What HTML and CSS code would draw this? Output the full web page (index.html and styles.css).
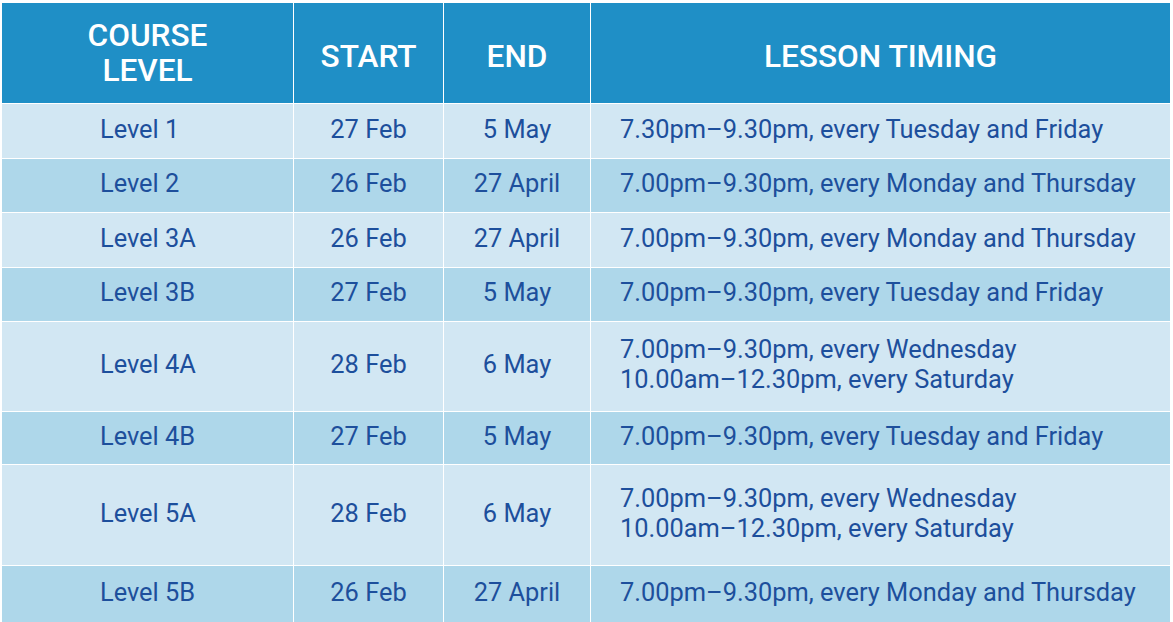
FILE: index.html
```html
<!DOCTYPE html>
<html lang="en">
<head>
<meta charset="utf-8">
<title>Course Schedule</title>
<link rel="stylesheet" href="styles.css">
</head>
<body>
<table class="schedule">
  <colgroup>
    <col class="c-level">
    <col class="c-start">
    <col class="c-end">
    <col class="c-timing">
  </colgroup>
  <thead>
    <tr class="head">
      <th class="two">COURSE<br>LEVEL</th>
      <th>START</th>
      <th>END</th>
      <th>LESSON TIMING</th>
    </tr>
  </thead>
  <tbody>
    <tr class="light r1">
      <td class="lvl">Level 1</td><td>27 Feb</td><td>5 May</td>
      <td class="time">7.30pm–9.30pm, every Tuesday and Friday</td>
    </tr>
    <tr class="dark r2">
      <td class="lvl">Level 2</td><td>26 Feb</td><td>27 April</td>
      <td class="time">7.00pm–9.30pm, every Monday and Thursday</td>
    </tr>
    <tr class="light r3">
      <td class="lvl">Level 3A</td><td>26 Feb</td><td>27 April</td>
      <td class="time">7.00pm–9.30pm, every Monday and Thursday</td>
    </tr>
    <tr class="dark r4">
      <td class="lvl">Level 3B</td><td>27 Feb</td><td>5 May</td>
      <td class="time">7.00pm–9.30pm, every Tuesday and Friday</td>
    </tr>
    <tr class="light r5">
      <td class="lvl">Level 4A</td><td>28 Feb</td><td>6 May</td>
      <td class="time">7.00pm–9.30pm, every Wednesday<br>10.00am–12.30pm, every Saturday</td>
    </tr>
    <tr class="dark r6">
      <td class="lvl">Level 4B</td><td>27 Feb</td><td>5 May</td>
      <td class="time">7.00pm–9.30pm, every Tuesday and Friday</td>
    </tr>
    <tr class="light r7">
      <td class="lvl">Level 5A</td><td>28 Feb</td><td>6 May</td>
      <td class="time">7.00pm–9.30pm, every Wednesday<br>10.00am–12.30pm, every Saturday</td>
    </tr>
    <tr class="dark r8">
      <td class="lvl">Level 5B</td><td>26 Feb</td><td>27 April</td>
      <td class="time">7.00pm–9.30pm, every Monday and Thursday</td>
    </tr>
  </tbody>
</table>
</body>
</html>
```
FILE: styles.css
```css
html, body {
  margin: 0;
  padding: 0;
  background: #ffffff;
  overflow: hidden;
}

body {
  font-family: Roboto, "Liberation Sans", sans-serif;
}

.schedule {
  border-collapse: separate;
  border-spacing: 1px;
  margin: 2px 0 0 1px;
  table-layout: fixed;
  width: 1170px;
}

.c-level { width: 291px; }
.c-start { width: 149px; }
.c-end { width: 146px; }
.c-timing { width: 579px; }

.schedule th,
.schedule td {
  padding: 0;
  text-align: center;
  vertical-align: middle;
  box-sizing: border-box;
}

.head th {
  background: #1f8fc6;
  color: #ffffff;
  font-weight: 500;
  font-size: 31.6px;
  line-height: 35px;
  height: 100px;
  padding-top: 6px;
}

.head th.two {
  padding-top: 0;
}

.schedule td {
  color: #1d4f9c;
  font-size: 25.4px;
  line-height: 30px;
  padding-bottom: 5px;
}

.light td { background: #d2e7f3; }
.dark td { background: #aed7ea; }

.schedule td.lvl {
  text-align: left;
  padding-left: 98px;
}

.schedule td.time {
  text-align: left;
  padding-left: 29px;
}

.r1 td { height: 54px; }
.r2 td { height: 53px; }
.r3 td { height: 54px; }
.r4 td { height: 53px; }
.r5 td { height: 89px; }
.r6 td { height: 52px; }
.r7 td { height: 100px; }
.r8 td { height: 56px; }
```
